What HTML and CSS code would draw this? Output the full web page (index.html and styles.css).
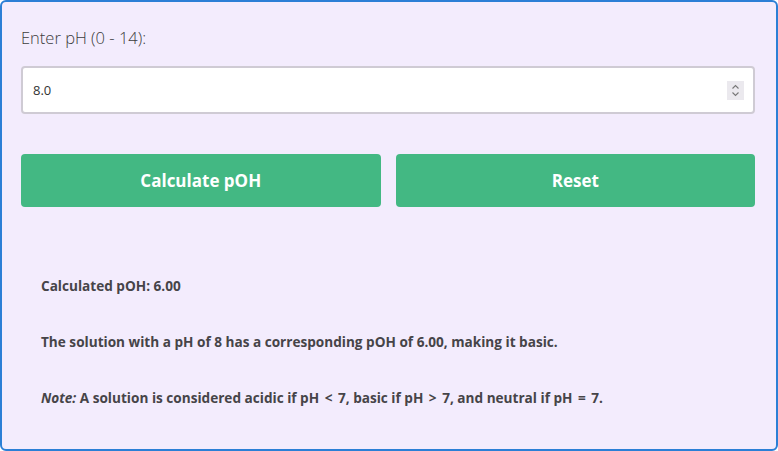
FILE: index.html
```html
<!DOCTYPE html>
<html>
<head>
<meta charset="utf-8">
<link rel="stylesheet" href="styles.css">
</head>
<body>
<div class="card">
  <label class="label">Enter pH (0 - 14):</label>
  <div class="field">
    <input class="field-input" type="text" value="8.0">
    <span class="spin">
      <svg width="17" height="19" viewBox="0 0 17 19"><path d="M5.5 7.5 L8.5 4.5 L11.5 7.5" fill="none" stroke="#777" stroke-width="1.1"/><path d="M5.5 11.5 L8.5 14.5 L11.5 11.5" fill="none" stroke="#777" stroke-width="1.1"/></svg>
    </span>
  </div>
  <div class="actions">
    <button class="btn">Calculate pOH</button>
    <button class="btn">Reset</button>
  </div>
  <div class="result">
    <p class="line">Calculated pOH: 6.00</p>
    <p class="line">The solution with a pH of 8 has a corresponding pOH of 6.00, making it basic.</p>
    <p class="line"><em>Note:</em> A solution is considered acidic if pH <span class="op">&lt;</span> 7, basic if pH <span class="op">&gt;</span> 7, and neutral if pH <span class="op">=</span> 7.</p>
  </div>
</div>
</body>
</html>
```
FILE: styles.css
```css
* { box-sizing: border-box; }
html, body { margin: 0; padding: 0; background: #ffffff; }
body { font-family: "Open Sans", "Noto Sans", sans-serif; }
.card {
  width: 778px;
  height: 451px;
  background: #f3ecfd;
  border: 2px solid #2b7fd6;
  border-radius: 6px;
  padding: 25px 21px 0 19px;
  display: flex;
  flex-direction: column;
}
.label {
  font-size: 16.5px;
  font-weight: 300;
  color: #3c3c3c;
  line-height: 22px;
}
.field {
  margin-top: 17px;
  height: 48px;
  background: #fff;
  border: 2px solid #cfcbd4;
  border-radius: 4px;
  display: flex;
  align-items: center;
  padding: 0 9px 0 10px;
}
.field-input {
  flex: 1;
  border: 0;
  outline: none;
  background: transparent;
  font-family: "Open Sans", sans-serif;
  font-size: 13px;
  color: #333;
  padding: 0;
}
.spin {
  width: 17px;
  height: 19px;
  background: #ebe9ee;
  display: flex;
}
.actions {
  margin-top: 40px;
  display: flex;
  gap: 15px;
}
.btn {
  flex: 1;
  height: 53px;
  border: 0;
  border-radius: 4px;
  background: #43b883;
  color: #fff;
  font-family: "Open Sans", sans-serif;
  font-weight: 700;
  font-size: 17px;
  padding: 0;
}
.result {
  margin-top: 69px;
  padding-left: 20px;
  display: flex;
  flex-direction: column;
  gap: 36px;
}
.line {
  margin: 0;
  font-size: 13.6px;
  font-weight: 700;
  color: #464448;
  line-height: 20px;
}
.line em { font-style: italic; }
.op { padding: 0 2px; }
```
